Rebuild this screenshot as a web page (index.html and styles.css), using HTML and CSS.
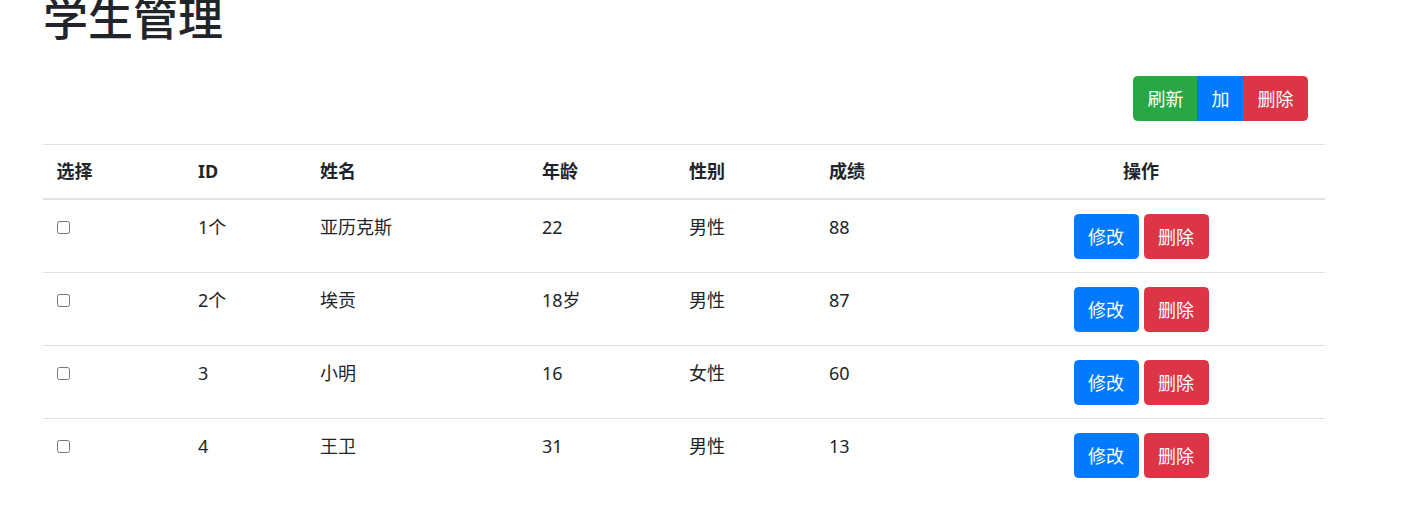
FILE: index.html
```html
<!DOCTYPE html>
<html lang="zh-CN">
<head>
<meta charset="utf-8">
<title>学生管理</title>
<link rel="stylesheet" href="styles.css">
</head>
<body>
<div class="page">
  <h1 class="title">学生管理</h1>
  <div class="toolbar">
    <div class="btn-group">
      <button class="btn btn-success">刷新</button>
      <button class="btn btn-primary">加</button>
      <button class="btn btn-danger">删除</button>
    </div>
  </div>
  <table class="table">
    <colgroup>
      <col class="c1"><col class="c2"><col class="c3"><col class="c4"><col class="c5"><col class="c6"><col class="c7">
    </colgroup>
    <thead>
      <tr>
        <th>选择</th><th>ID</th><th>姓名</th><th>年龄</th><th>性别</th><th>成绩</th><th class="center">操作</th>
      </tr>
    </thead>
    <tbody>
      <tr>
        <td><input type="checkbox" class="chk"></td><td>1个</td><td>亚历克斯</td><td>22</td><td>男性</td><td>88</td>
        <td class="center"><div class="ops"><button class="btn btn-primary rb">修改</button><button class="btn btn-danger rb">删除</button></div></td>
      </tr>
      <tr>
        <td><input type="checkbox" class="chk"></td><td>2个</td><td>埃贡</td><td>18岁</td><td>男性</td><td>87</td>
        <td class="center"><div class="ops"><button class="btn btn-primary rb">修改</button><button class="btn btn-danger rb">删除</button></div></td>
      </tr>
      <tr>
        <td><input type="checkbox" class="chk"></td><td>3</td><td>小明</td><td>16</td><td>女性</td><td>60</td>
        <td class="center"><div class="ops"><button class="btn btn-primary rb">修改</button><button class="btn btn-danger rb">删除</button></div></td>
      </tr>
      <tr>
        <td><input type="checkbox" class="chk"></td><td>4</td><td>王卫</td><td>31</td><td>男性</td><td>13</td>
        <td class="center"><div class="ops"><button class="btn btn-primary rb">修改</button><button class="btn btn-danger rb">删除</button></div></td>
      </tr>
    </tbody>
  </table>
</div>
</body>
</html>
```

FILE: styles.css
```css
* { box-sizing: border-box; }
html, body { margin: 0; padding: 0; background: #fff; }
body {
  font-family: "Noto Sans", "Noto Sans CJK SC", sans-serif;
  font-size: 18px;
  line-height: 27px;
  color: #212529;
  overflow: hidden;
}
.page {
  padding-left: 43px;
  width: 1325px;
}
.title {
  font-family: "Noto Sans CJK SC", sans-serif;
  font-size: 45px;
  line-height: 54px;
  font-weight: 500;
  margin: -10px 0 32px 0;
}
.toolbar {
  display: flex;
  justify-content: flex-end;
  padding-right: 17px;
}
.btn-group {
  display: flex;
}
.btn {
  font-family: "Noto Sans CJK SC", sans-serif;
  font-size: 18px;
  line-height: 27px;
  font-weight: 400;
  color: #fff;
  border: 1px solid transparent;
  padding: 8px 13.5px;
  border-radius: 4.5px;
  cursor: pointer;
}
.btn-group .btn { border-radius: 0; }
.btn-group .btn + .btn { margin-left: -1px; }
.btn-group .btn:first-child { border-radius: 4.5px 0 0 4.5px; }
.btn-group .btn:last-child { border-radius: 0 4.5px 4.5px 0; }
.btn-success { background: #28a745; border-color: #28a745; }
.btn-primary { background: #007bff; border-color: #007bff; }
.btn-danger { background: #dc3545; border-color: #dc3545; }
.rb { padding: 8px 13.5px; }

.table {
  width: 1282px;
  margin-top: 23px;
  border-collapse: collapse;
  table-layout: fixed;
}
.c1 { width: 141.5px; }
.c2 { width: 122px; }
.c3 { width: 222px; }
.c4 { width: 147px; }
.c5 { width: 140px; }
.c6 { width: 141.5px; }
.c7 { width: 368px; }
.table th, .table td {
  padding: 13.5px;
  border-top: 1px solid #dee2e6;
  text-align: left;
  vertical-align: top;
}
.table th {
  font-weight: 700;
  vertical-align: bottom;
  padding: 13px 13.5px;
  border-bottom: 2px solid #dee2e6;
}
.table thead + tbody tr:first-child td { border-top: 0; }
.table .center { text-align: center; }
.ops {
  display: flex;
  justify-content: center;
  gap: 5px;
}
.chk {
  margin: 7px 0 0 0;
  width: 13px;
  height: 13px;
  vertical-align: top;
}
```
